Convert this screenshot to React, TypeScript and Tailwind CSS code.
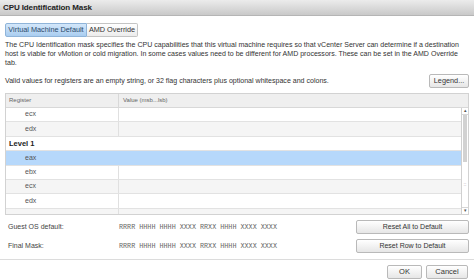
import React from "react";

type Row = { name: string; level?: boolean; selected?: boolean; alt?: boolean };

const rows: Row[] = [
  { name: "ecx" },
  { name: "edx", alt: true },
  { name: "Level 1", level: true },
  { name: "eax", selected: true },
  { name: "ebx" },
  { name: "ecx", alt: true },
  { name: "edx" },
  { name: "", alt: true },
];

const mask = "RRRR HHHH HHHH XXXX RRXX HHHH XXXX XXXX";

function Btn({ children, className = "" }: { children: React.ReactNode; className?: string }) {
  return (
    <button
      className={`flex items-center justify-center rounded-[2px] border border-[#b9b9b9] bg-gradient-to-b from-[#ffffff] to-[#e6e6e6] text-[#333] ${className}`}
    >
      {children}
    </button>
  );
}

export default function App() {
  return (
    <div
      className="w-[474px] h-[279px] bg-white text-[#333] overflow-hidden flex flex-col"
      style={{ fontFamily: '"Liberation Sans", Arial, sans-serif' }}
    >
      {/* title bar */}
      <div className="h-[16px] flex items-center px-[3px] bg-gradient-to-b from-[#ececec] to-[#c9c9c9] border-b border-[#b5b5b5]">
        <span className="text-[8px] font-bold text-[#222] tracking-[-0.1px]">CPU Identification Mask</span>
      </div>

      <div className="flex flex-col px-[5px]">
        {/* tabs */}
        <div className="flex mt-[7px] h-[14px] text-[7.3px]">
          <div className="w-[82px] flex items-center justify-center border border-[#8fb4d9] bg-gradient-to-b from-[#d3e7fa] to-[#a9cdf0] text-[#2b4a6b] rounded-l-[2px]">
            Virtual Machine Default
          </div>
          <div className="w-[51px] flex items-center justify-center border border-l-0 border-[#c4c4c4] bg-gradient-to-b from-[#ffffff] to-[#ececec] rounded-r-[2px]">
            AMD Override
          </div>
        </div>

        {/* description */}
        <p className="mt-[3px] text-[7.05px] leading-[9px] text-[#333]">
          The CPU Identification mask specifies the CPU capabilities that this virtual machine requires so that vCenter Server can determine if a destination host is viable for vMotion or cold migration. In some cases values need to be different for AMD processors. These can be set in the AMD Override tab.
        </p>

        <div className="flex items-center justify-between mt-[7px] h-[14px]">
          <span className="text-[7.05px]">
            Valid values for registers are an empty string, or 32 flag characters plus optional whitespace and colons.
          </span>
          <Btn className="w-[40px] h-[14px] text-[7.3px]">Legend...</Btn>
        </div>

        {/* table */}
        <div className="mt-[5px] border border-[#d2d2d2] flex flex-col">
          <div className="h-[14px] flex bg-[#efefef] border-b border-[#d8d8d8] text-[6px] text-[#666]">
            <div className="w-[113px] flex items-center pl-[3px] border-r border-[#d8d8d8]">Register</div>
            <div className="flex-1 flex items-center pl-[4px]">Value (msb...lsb)</div>
          </div>
          <div className="h-[106px] flex overflow-hidden">
            <div className="flex-1 flex flex-col">
              {rows.map((r, i) =>
                r.level ? (
                  <div key={i} className="h-[14.4px] shrink-0 flex items-center pl-[3px] border-b border-[#e2e2e2] bg-white text-[7.5px] font-bold text-[#222]">
                    {r.name}
                  </div>
                ) : (
                  <div
                    key={i}
                    className={`h-[14.4px] shrink-0 flex border-b border-[#e2e2e2] text-[7px] text-[#555] ${
                      r.selected ? "bg-[#b6d8fb]" : r.alt ? "bg-[#f5f5f5]" : "bg-white"
                    }`}
                  >
                    <div className={`w-[113px] flex items-center pl-[19px] ${r.selected ? "" : "border-r border-[#e0e0e0]"}`}>{r.name}</div>
                    <div className="flex-1" />
                  </div>
                )
              )}
            </div>
            {/* scrollbar */}
            <div className="w-[7px] flex flex-col border-l border-[#d0d0d0] bg-white">
              <div className="h-[7px] flex items-center justify-center text-[5px] text-[#555] border-b border-[#d6d6d6]">▴</div>
              <div className="h-[47px] bg-[#d2d2d2] mx-[1px]" />
              <div className="flex-1 flex items-center justify-center text-[5px] text-[#888] leading-none">::</div>
              <div className="h-[7px] flex items-center justify-center text-[5px] text-[#555] border-t border-[#d6d6d6]">▾</div>
            </div>
          </div>
        </div>

        {/* masks */}
        <div className="flex items-center mt-[5px] h-[14px] text-[7px]">
          <span className="w-[114px] pl-[3px] text-[#444]">Guest OS default:</span>
          <span className="flex-1 text-[6.75px] text-[#666]" style={{ fontFamily: '"Liberation Mono", monospace' }}>{mask}</span>
          <Btn className="w-[113px] h-[14px] text-[7px]">Reset All to Default</Btn>
        </div>
        <div className="flex items-center mt-[5px] h-[14px] text-[7px]">
          <span className="w-[114px] pl-[3px] text-[#444]">Final Mask:</span>
          <span className="flex-1 text-[6.75px] text-[#666]" style={{ fontFamily: '"Liberation Mono", monospace' }}>{mask}</span>
          <Btn className="w-[113px] h-[14px] text-[7px]">Reset Row to Default</Btn>
        </div>
      </div>

      <div className="mt-[6px] border-t border-[#dcdcdc]" />
      <div className="flex justify-end gap-[4px] px-[6px] mt-[5px]">
        <Btn className="w-[35px] h-[14px] text-[7.5px]">OK</Btn>
        <Btn className="w-[42px] h-[14px] text-[7.5px]">Cancel</Btn>
      </div>
    </div>
  );
}
